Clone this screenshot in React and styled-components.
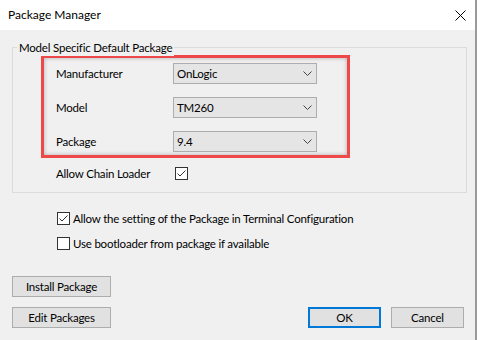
import React from "react";
import styled, { createGlobalStyle } from "styled-components";

const Global = createGlobalStyle`
  html, body { margin: 0; padding: 0; background: #f0f0f0; }
  body {
    font-family: Lato, "Segoe UI", "Liberation Sans", sans-serif;
    font-size: 11.5px;
    letter-spacing: -0.2px;
    color: #000;
  }
  * { box-sizing: border-box; }
`;

const Window = styled.div`
  width: 477px;
  height: 340px;
  border-right: 2px solid #9a9a9a;
  display: flex;
  flex-direction: column;
  background: #f0f0f0;
  overflow: hidden;
`;

const TitleBar = styled.div`
  height: 30px;
  flex: none;
  background: #fff;
  display: flex;
  align-items: center;
  justify-content: space-between;
  padding: 0 9px 0 8px;
`;

const Title = styled.span`
  font-size: 12px;
  letter-spacing: 0;
  line-height: 16px;
`;

const Body = styled.div`
  flex: 1;
  display: flex;
  flex-direction: column;
  padding: 17px 11px 0 12px;
`;

const Group = styled.div`
  position: relative;
  width: 455px;
  height: 146px;
  border: 1px solid #dcdcdc;
  padding: 7px 0 0 28px;
  display: flex;
  flex-direction: column;
`;

const Legend = styled.span`
  position: absolute;
  top: -8px;
  left: 4px;
  padding: 0 2px;
  background: #f0f0f0;
  line-height: 16px;
`;

const Highlight = styled.div`
  width: 309px;
  height: 103px;
  border: 3px solid #ef4848;
  box-shadow: inset 0 0 4px rgba(0, 0, 0, 0.28);
  padding: 5px 0 0 12px;
  display: flex;
  flex-direction: column;
  gap: 13px;
`;

const Row = styled.div`
  display: flex;
  align-items: center;
  height: ${(p) => p.$h || 21}px;
  margin-top: ${(p) => p.$mt || 0}px;
  margin-left: ${(p) => p.$ml || 0}px;
  gap: ${(p) => p.$gap || 0}px;
`;

const Label = styled.span`
  width: ${(p) => p.$w}px;
  flex: none;
  line-height: 16px;
`;

const SelectBox = styled.div`
  width: 144px;
  height: 21px;
  border: 1px solid #adadad;
  background: #e5e5e5;
  display: flex;
  align-items: center;
  justify-content: space-between;
  padding: 0 4px 0 3px;
`;

const BoxFrame = styled.span`
  width: 13px;
  height: 13px;
  flex: none;
  border: 1px solid #333;
  background: #fff;
  display: flex;
  align-items: center;
  justify-content: center;
`;

const Buttons = styled.div`
  display: flex;
  flex-direction: column;
  gap: 10px;
  margin-top: 26px;
`;

const ButtonRow = styled.div`
  display: flex;
  align-items: center;
  gap: 10px;
`;

const Spacer = styled.div`
  flex: 1;
`;

const Button = styled.button`
  font: inherit;
  letter-spacing: inherit;
  color: #000;
  width: ${(p) => p.$w}px;
  height: 21px;
  padding: 0;
  background: #e1e1e1;
  border: ${(p) => (p.$primary ? "2px solid #0078d7" : "1px solid #adadad")};
  display: flex;
  align-items: center;
  justify-content: center;
  line-height: 16px;
`;

const Chevron = () => (
  <svg width="9" height="5" viewBox="0 0 9 5">
    <path d="M0.5 0.5 L4.5 4.5 L8.5 0.5" fill="none" stroke="#444" strokeWidth="1" />
  </svg>
);

const Select = ({ value }) => (
  <SelectBox>
    <span>{value}</span>
    <Chevron />
  </SelectBox>
);

const Checkbox = ({ checked }) => (
  <BoxFrame>
    {checked && (
      <svg width="11" height="11" viewBox="0 0 11 11">
        <path d="M1.5 5.5 L4 8 L9.5 2.5" fill="none" stroke="#333" strokeWidth="1" />
      </svg>
    )}
  </BoxFrame>
);

const CloseIcon = () => (
  <svg width="11" height="11" viewBox="0 0 11 11">
    <path d="M0.5 0.5 L10.5 10.5 M10.5 0.5 L0.5 10.5" stroke="#000" strokeWidth="1" />
  </svg>
);

export default function App() {
  return (
    <>
      <Global />
      <Window>
        <TitleBar>
          <Title>Package Manager</Title>
          <CloseIcon />
        </TitleBar>
        <Body>
          <Group>
            <Legend>Model Specific Default Package</Legend>
            <Highlight>
              <Row>
                <Label $w={117}>Manufacturer</Label>
                <Select value="OnLogic" />
              </Row>
              <Row>
                <Label $w={117}>Model</Label>
                <Select value="TM260" />
              </Row>
              <Row>
                <Label $w={117}>Package</Label>
                <Select value="9.4" />
              </Row>
            </Highlight>
            <Row $h={13} $mt={9} $ml={15}>
              <Label $w={119}>Allow Chain Loader</Label>
              <Checkbox checked />
            </Row>
          </Group>
          <Row $h={13} $mt={19} $ml={45} $gap={3}>
            <Checkbox checked />
            <span>Allow the setting of the Package in Terminal Configuration</span>
          </Row>
          <Row $h={13} $mt={12} $ml={45} $gap={3}>
            <Checkbox />
            <span>Use bootloader from package if available</span>
          </Row>
          <Buttons>
            <ButtonRow>
              <Button $w={99}>Install Package</Button>
            </ButtonRow>
            <ButtonRow>
              <Button $w={99}>Edit Packages</Button>
              <Spacer />
              <Button $w={73} $primary>OK</Button>
              <Button $w={73}>Cancel</Button>
            </ButtonRow>
          </Buttons>
        </Body>
      </Window>
    </>
  );
}
